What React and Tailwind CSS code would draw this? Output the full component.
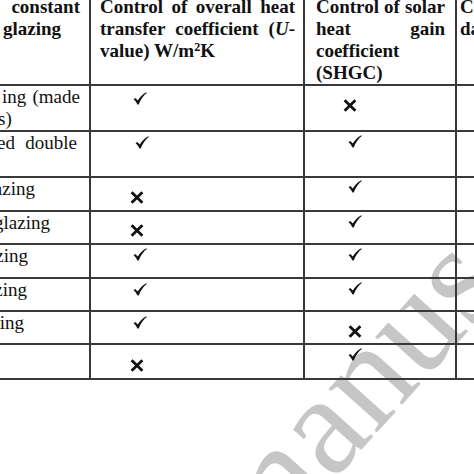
import React from 'react';

const Check = () => (
  <svg width="14" height="13" viewBox="0 0 14 13">
    <path
      d="M0.5 7.3 L2.3 6.0 L4.8 8.6 C7.0 5.2 9.7 2.1 13.4 0.3 L13.8 1.0 C10.5 3.5 7.8 7.2 5.7 12.5 L4.5 12.5 C3.4 10.3 2.2 8.7 0.5 7.3 Z"
      fill="#111"
    />
  </svg>
);

const Cross = () => (
  <svg width="14" height="13" viewBox="0 0 14 13">
    <path d="M1.6 1.2 L12.4 11.8 M12.4 1.2 L1.6 11.8" stroke="#111" strokeWidth="2.8" />
  </svg>
);

// each row: col1 label fragment, then mark in col2 / col3 with its padding
const rows = [
  {
    h: 'h-[46px]',
    label: (
      <>
        <div className="flex justify-between w-[80px] pl-[2px]">
          <span>ing</span>
          <span>(made</span>
        </div>
        <div className="-ml-[2px]">s)</div>
      </>
    ),
    c2: { m: 'check', cls: 'pl-[42px] pt-[6px]' },
    c3: { m: 'cross', cls: 'pl-[38px] pt-[13px]' },
  },
  {
    h: 'h-[46px]',
    label: (
      <div className="flex justify-between w-[80px] -ml-[3px]">
        <span>ed</span>
        <span>double</span>
      </div>
    ),
    c2: { m: 'check', cls: 'pl-[44px] pt-[4px]' },
    c3: { m: 'check', cls: 'pl-[43px] pt-[3px]' },
  },
  {
    h: 'h-[34px]',
    label: <div className="-ml-[21px]">glazing</div>,
    c2: { m: 'cross', cls: 'pl-[39px] pt-[13px]' },
    c3: { m: 'check', cls: 'pl-[43px] pt-[2px]' },
  },
  {
    h: 'h-[33px]',
    label: <div className="-ml-[6px]">glazing</div>,
    c2: { m: 'cross', cls: 'pl-[39px] pt-[12px]' },
    c3: { m: 'check', cls: 'pl-[43px] pt-[3px]' },
  },
  {
    h: 'h-[34px]',
    label: <div className="-ml-[28px]">glazing</div>,
    c2: { m: 'check', cls: 'pl-[42px] pt-[3px]' },
    c3: { m: 'check', cls: 'pl-[43px] pt-[3px]' },
  },
  {
    h: 'h-[33px]',
    label: <div className="-ml-[29px]">glazing</div>,
    c2: { m: 'check', cls: 'pl-[42px] pt-[4px]' },
    c3: { m: 'check', cls: 'pl-[43px] pt-[3px]' },
  },
  {
    h: 'h-[33px]',
    label: <div className="-ml-[32px]">glazing</div>,
    c2: { m: 'check', cls: 'pl-[42px] pt-[4px]' },
    c3: { m: 'cross', cls: 'pl-[43px] pt-[13px]' },
  },
  {
    h: 'h-[35px]',
    label: null,
    c2: { m: 'cross', cls: 'pl-[39px] pt-[14px]' },
    c3: { m: 'check', cls: 'pl-[43px] pt-[3px]' },
  },
];

const Mark = ({ m }) => (m === 'check' ? <Check /> : <Cross />);

const cell = 'border-r-2 border-b-2 border-[#383838] overflow-hidden';

export default function App() {
  return (
    <div className="relative isolate w-[474px] h-[474px] overflow-hidden bg-white font-['Liberation_Serif',serif] text-[19px] leading-[22px] text-[#111]">
      {/* watermark */}
      <div className="absolute left-[347px] top-[394px] z-0">
        <div className="-translate-x-1/2 -translate-y-1/2 -rotate-[48deg] whitespace-nowrap text-[142px] leading-none text-[#c6c6c6]">
          manus
        </div>
      </div>

      <div className="relative z-10 grid grid-cols-[91px_214px_152px_60px]">
        {/* header */}
        <div className={`${cell} h-[86px] font-bold`}>
          <div className="-mt-[4px] w-[80px]">
            <div className="text-right">constant</div>
            <div className="pl-[3px]">glazing</div>
          </div>
        </div>
        <div className={`${cell} h-[86px] font-bold pl-[9px] pr-[8px]`}>
          <div className="-mt-[4px]">
            <div className="flex justify-between">
              <span>Control</span>
              <span>of</span>
              <span>overall</span>
              <span>heat</span>
            </div>
            <div className="flex justify-between">
              <span>transfer</span>
              <span>coefficient</span>
              <span>
                (<i>U</i>-
              </span>
            </div>
            <div>
              value) W/m<sup className="text-[12px]">2</sup>K
            </div>
          </div>
        </div>
        <div className={`${cell} h-[86px] font-bold pl-[11px] pr-[10px]`}>
          <div className="-mt-[4px]">
            <div className="flex justify-between">
              <span>Control</span>
              <span>of</span>
              <span>solar</span>
            </div>
            <div className="flex justify-between">
              <span>heat</span>
              <span>gain</span>
            </div>
            <div>coefficient</div>
            <div>(SHGC)</div>
          </div>
        </div>
        <div className={`${cell} h-[86px] font-bold pl-[3px] whitespace-nowrap`}>
          <div className="-mt-[4px]">
            <div>Control of</div>
            <div>daylight</div>
          </div>
        </div>

        {rows.map((r, i) => (
          <React.Fragment key={i}>
            <div className={`${cell} ${r.h} whitespace-nowrap`}>{r.label}</div>
            <div className={`${cell} ${r.h} ${r.c2.cls}`}>
              <Mark m={r.c2.m} />
            </div>
            <div className={`${cell} ${r.h} ${r.c3.cls}`}>
              <Mark m={r.c3.m} />
            </div>
            <div className={`${cell} ${r.h}`} />
          </React.Fragment>
        ))}
      </div>
    </div>
  );
}
